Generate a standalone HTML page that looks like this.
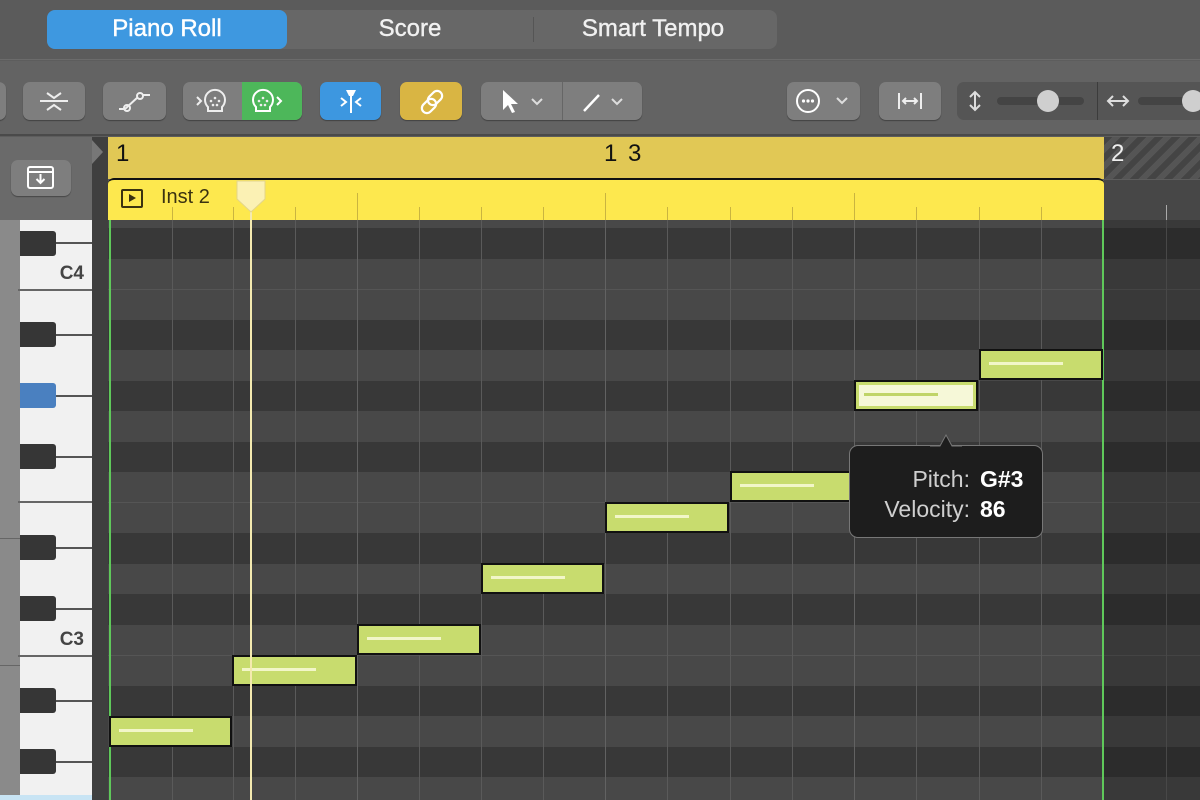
<!DOCTYPE html>
<html><head><meta charset="utf-8"><style>
*{margin:0;padding:0;box-sizing:border-box}
body{width:1200px;height:800px;overflow:hidden;background:#5d5d5d;font-family:"Liberation Sans",sans-serif;position:relative}
.a{position:absolute}
.btn{position:absolute;top:82px;height:38px;background:#7e7e7e;border-radius:7px;box-shadow:0 1px 1px rgba(0,0,0,.35)}
.dk{position:absolute;left:108px;width:1092px;height:30.5px;background:#383838}
.vl{position:absolute;top:220px;width:1px;height:580px;background:#5a5a5a}
.tk{position:absolute;top:207px;width:1px;height:13px;background:#c9b440}
.bk{position:absolute;left:20px;width:36px;height:25px;background:#363636;border-radius:0 3px 3px 0}
.kl{position:absolute;left:56px;width:36px;height:2px;background:#555}
.wl{position:absolute;left:18px;width:74px;height:2px;background:#666}
.n{position:absolute;height:31px;background:#c8dc6e;border:2px solid #111}
.n i{position:absolute;left:8px;top:11px;height:3px;width:74px;background:#f2f6c8}
.tab{position:absolute;top:10px;height:39px;font-size:24px;text-align:center;line-height:38px;-webkit-text-stroke:0.4px currentColor}
</style></head><body>
<div class="a" style="left:0;top:0;width:1200px;height:60px;background:#5b5b5b;border-bottom:1px solid #6b6b6b"></div>
<div class="a" style="left:47px;top:10px;width:730px;height:39px;background:#676767;border-radius:8px"></div>
<div class="tab" style="left:47px;width:240px;background:#3e98e0;border-radius:8px;color:#fff">Piano Roll</div>
<div class="tab" style="left:287px;width:246px;color:#f0f0f0">Score</div>
<div class="a" style="left:533px;top:17px;width:1px;height:25px;background:#555"></div>
<div class="tab" style="left:533px;width:240px;color:#f0f0f0">Smart Tempo</div>
<div class="a" style="left:0;top:61px;width:1200px;height:75px;background:#636363;border-bottom:2px solid #4a4a4a"></div>
<div class="btn" style="left:-10px;width:16px"></div>
<div class="btn" style="left:23px;width:62px"><svg width="62" height="38"><path d="M24 11l7 5 7-5M17 19h28M24 28l7-5 7 5" stroke="#eee" stroke-width="2" fill="none"/></svg></div>
<div class="btn" style="left:103px;width:63px"><svg width="63" height="38"><path d="M16 27h6M22 27l13-12M39 13h8" stroke="#eee" stroke-width="2" fill="none"/><circle cx="24" cy="26" r="3" stroke="#eee" stroke-width="2" fill="none"/><circle cx="37" cy="14" r="3" stroke="#eee" stroke-width="2" fill="none"/></svg></div>
<div class="btn" style="left:183px;width:119px;overflow:hidden"><div class="a" style="left:59px;top:0;width:60px;height:38px;background:#4db75a"></div>
<svg class="a" width="119" height="38"><path d="M14 15l4 4-4 4" stroke="#eee" stroke-width="2" fill="none"/><path d="M25 29v-4a10 10 0 1 1 14 0v4z" stroke="#eee" stroke-width="2" fill="none"/><path d="M73 29v-4a10 10 0 1 1 14 0v4z" stroke="#fff" stroke-width="2" fill="none"/><path d="M94 15l4 4-4 4" stroke="#fff" stroke-width="2" fill="none"/><g fill="#eee"><circle cx="28" cy="19" r="1.3"/><circle cx="32" cy="16" r="1.3"/><circle cx="36" cy="19" r="1.3"/><circle cx="30" cy="23" r="1.3"/><circle cx="34" cy="23" r="1.3"/><circle cx="76" cy="19" r="1.3"/><circle cx="80" cy="16" r="1.3"/><circle cx="84" cy="19" r="1.3"/><circle cx="78" cy="23" r="1.3"/><circle cx="82" cy="23" r="1.3"/></g></svg></div>
<div class="btn" style="left:320px;width:61px;background:#3d97e0"><svg width="61" height="38"><path d="M26 8h10l-3 6h-4z" fill="#fff"/><path d="M31 13v18M21 16l5 4-5 4M41 16l-5 4 5 4" stroke="#fff" stroke-width="2" fill="none"/></svg></div>
<div class="btn" style="left:400px;width:62px;background:#d9b543"><svg width="62" height="38"><g stroke="#fff" stroke-width="2.2" fill="none"><rect x="24" y="16" width="10" height="16" rx="5" transform="rotate(45 29 24)"/><rect x="30" y="8" width="10" height="16" rx="5" transform="rotate(45 35 16)"/></g></svg></div>
<div class="btn" style="left:481px;width:161px"><div class="a" style="left:81px;top:0;width:1px;height:38px;background:#666"></div>
<svg class="a" width="161" height="38"><path d="M22 8v20l5-5 4 8 3-1-4-8h7z" fill="#fff"/><path d="M51 17l5 5 5-5M131 17l5 5 5-5" stroke="#ddd" stroke-width="2" fill="none"/><path d="M103 29l15-16" stroke="#fff" stroke-width="2.5"/></svg></div>
<div class="btn" style="left:787px;width:73px"><svg width="73" height="38"><circle cx="21" cy="19" r="11" stroke="#fff" stroke-width="2" fill="none"/><g fill="#fff"><circle cx="16.5" cy="19" r="1.6"/><circle cx="21" cy="19" r="1.6"/><circle cx="25.5" cy="19" r="1.6"/></g><path d="M50 16l5 5 5-5" stroke="#ddd" stroke-width="2" fill="none"/></svg></div>
<div class="btn" style="left:879px;width:62px"><svg width="62" height="38"><path d="M20 11v16M42 11v16M24 19h14M27 16l-3 3 3 3M35 16l3 3-3 3" stroke="#eee" stroke-width="2" fill="none"/></svg></div>
<div class="a" style="left:957px;top:82px;width:260px;height:38px;background:#555;border-radius:7px"></div>
<div class="a" style="left:1097px;top:82px;width:1px;height:38px;background:#3c3c3c"></div>
<svg class="a" style="left:957px;top:82px" width="243" height="38"><path d="M18 10v18M13 15l5-5 5 5M13 23l5 5 5-5" stroke="#ddd" stroke-width="2" fill="none"/><rect x="40" y="15" width="87" height="8" rx="4" fill="#444"/><circle cx="91" cy="19" r="11" fill="#cfcfcf"/><path d="M151 19h20M156 14l-5 5 5 5M166 14l5 5-5 5" stroke="#ddd" stroke-width="2" fill="none"/><rect x="181" y="15" width="70" height="8" rx="4" fill="#444"/><circle cx="236" cy="19" r="11" fill="#cfcfcf"/></svg>
<div class="a" style="left:0;top:137px;width:92px;height:663px;background:#6a6a6a"></div>
<div class="a" style="left:11px;top:160px;width:60px;height:36px;background:#7e7e7e;border-radius:7px;box-shadow:0 1px 1px rgba(0,0,0,.35)"><svg width="60" height="36"><rect x="17" y="7" width="25" height="21" rx="2" stroke="#fff" stroke-width="2" fill="none"/><path d="M17 12h25M29.5 14v9M25.5 19l4 4 4-4" stroke="#fff" stroke-width="2" fill="none"/></svg></div>
<div class="a" style="left:0;top:220px;width:20px;height:580px;background:#8a8a8a"></div>
<div class="a" style="left:0;top:538px;width:20px;height:1px;background:#666"></div>
<div class="a" style="left:0;top:665px;width:20px;height:1px;background:#666"></div>
<div class="a" style="left:20px;top:220px;width:72px;height:580px;background:#f1f1f1"></div>
<div class="wl" style="top:289px"></div><div class="wl" style="top:501px"></div><div class="wl" style="top:655px"></div>
<div class="bk" style="top:230.5px"></div><div class="kl" style="top:242px"></div>
<div class="bk" style="top:322px"></div><div class="kl" style="top:334px"></div>
<div class="bk" style="top:383px;background:#4a80c0"></div><div class="kl" style="top:395px"></div>
<div class="bk" style="top:444px"></div><div class="kl" style="top:456px"></div>
<div class="bk" style="top:535px"></div><div class="kl" style="top:547px"></div>
<div class="bk" style="top:596px"></div><div class="kl" style="top:608px"></div>
<div class="bk" style="top:688px"></div><div class="kl" style="top:700px"></div>
<div class="bk" style="top:749px"></div><div class="kl" style="top:761px"></div>
<div class="a" style="left:40px;top:263px;width:44px;text-align:right;font-weight:bold;font-size:19px;color:#444">C4</div>
<div class="a" style="left:40px;top:629px;width:44px;text-align:right;font-weight:bold;font-size:19px;color:#444">C3</div>
<div class="a" style="left:0;top:795px;width:1200px;height:5px;background:#c8e4f4"></div>
<div class="a" style="left:92px;top:137px;width:16px;height:663px;background:#3f3f3f"></div>
<div class="a" style="left:92px;top:140px;width:0;height:0;border-left:11px solid #777;border-top:12px solid transparent;border-bottom:12px solid transparent"></div>
<div class="a" style="left:108px;top:220px;width:1092px;height:580px;background:#484848"></div>
<div class="dk" style="top:228px"></div><div class="dk" style="top:319.5px"></div><div class="dk" style="top:380.5px"></div><div class="dk" style="top:441.5px"></div><div class="dk" style="top:533px"></div><div class="dk" style="top:594px"></div><div class="dk" style="top:685.5px"></div><div class="dk" style="top:746.5px"></div>
<div class="a" style="left:108px;top:289px;width:1092px;height:1px;background:#555"></div>
<div class="a" style="left:108px;top:502px;width:1092px;height:1px;background:#555"></div>
<div class="a" style="left:108px;top:655px;width:1092px;height:1px;background:#555"></div>
<div class="vl" style="left:172px"></div><div class="vl" style="left:233px"></div><div class="vl" style="left:295px"></div><div class="vl" style="left:357px;background:#626262"></div><div class="vl" style="left:419px"></div><div class="vl" style="left:481px"></div><div class="vl" style="left:543px"></div><div class="vl" style="left:605px;background:#626262"></div><div class="vl" style="left:667px"></div><div class="vl" style="left:730px"></div><div class="vl" style="left:792px"></div><div class="vl" style="left:854px;background:#626262"></div><div class="vl" style="left:916px"></div><div class="vl" style="left:979px"></div><div class="vl" style="left:1041px"></div><div class="vl" style="left:1166px"></div>
<div class="a" style="left:1104px;top:180px;width:96px;height:620px;background:rgba(0,0,0,.2)"></div>
<div class="a" style="left:109px;top:220px;width:2px;height:580px;background:#5fc85a"></div>
<div class="a" style="left:1102px;top:220px;width:2px;height:580px;background:#5fc85a"></div>
<div class="a" style="left:108px;top:137px;width:996px;height:42px;background:#e1c855"></div>
<div class="a" style="left:1104px;top:137px;width:96px;height:42px;background:repeating-linear-gradient(135deg,#444 0 6px,#555 6px 12px)"></div>
<div class="a" style="left:116px;top:140px;font-size:24px;color:#111">1</div>
<div class="a" style="left:604px;top:140px;font-size:24px;color:#111;letter-spacing:2px">1 3</div>
<div class="a" style="left:1111px;top:140px;font-size:24px;color:#eee">2</div>
<div class="a" style="left:108px;top:178px;width:996px;height:42px;background:#fde84e;border-radius:6px 6px 0 0;border-top:2px solid #111"></div>
<div class="a" style="left:1104px;top:180px;width:96px;height:40px;background:#474747"></div>
<div class="a" style="left:1166px;top:205px;width:1px;height:15px;background:#aaa"></div>
<div class="tk" style="left:172px"></div><div class="tk" style="left:233px"></div><div class="tk" style="left:295px"></div><div class="tk" style="left:357px;top:193px;height:27px"></div><div class="tk" style="left:419px"></div><div class="tk" style="left:481px"></div><div class="tk" style="left:543px"></div><div class="tk" style="left:605px;top:193px;height:27px"></div><div class="tk" style="left:667px"></div><div class="tk" style="left:730px"></div><div class="tk" style="left:792px"></div><div class="tk" style="left:854px;top:193px;height:27px"></div><div class="tk" style="left:916px"></div><div class="tk" style="left:979px"></div><div class="tk" style="left:1041px"></div>
<div class="a" style="left:121px;top:189px;width:22px;height:19px;border:2px solid #3a3210;border-radius:2px"><div class="a" style="left:6px;top:3px;border-left:7px solid #3a3210;border-top:4.5px solid transparent;border-bottom:4.5px solid transparent"></div></div>
<div class="a" style="left:161px;top:186px;font-size:20px;color:#3a3210">Inst 2</div>
<div class="n" style="left:109px;top:716px;width:123px"><i></i></div>
<div class="n" style="left:232px;top:655px;width:125px"><i></i></div>
<div class="n" style="left:357px;top:624px;width:124px"><i></i></div>
<div class="n" style="left:481px;top:563px;width:123px"><i></i></div>
<div class="n" style="left:605px;top:502px;width:124px"><i></i></div>
<div class="n" style="left:730px;top:471px;width:124px"><i></i></div>
<div class="n" style="left:854px;top:380px;width:124px;background:#f6f8d8;box-shadow:inset 0 0 0 3px #c8dc6e"><i style="background:#c0d468"></i></div>
<div class="n" style="left:979px;top:349px;width:124px"><i></i></div>
<div class="a" style="left:250px;top:182px;width:2px;height:618px;background:#f4eab0"></div>
<svg class="a" style="left:234px;top:180px" width="34" height="34"><path d="M3 1h28v18l-14 13-14-13z" fill="#fbf1b4" stroke="#e3d58a"/></svg>
<div class="a" style="left:849px;top:445px;width:194px;height:93px;background:#1d1d1d;border:1px solid #777;border-radius:9px"></div>
<svg class="a" style="left:930px;top:432px" width="32" height="15"><path d="M0 14l10 0 6-11 6 11 10 0" fill="#1d1d1d" stroke="#777"/></svg>
<div class="a" style="left:850px;top:464px;width:120px;text-align:right;font-size:23px;color:#cfcfcf;line-height:30px">Pitch:<br>Velocity:</div>
<div class="a" style="left:980px;top:464px;font-size:23px;color:#fff;line-height:30px;font-weight:bold">G#3<br>86</div>
</body></html>
